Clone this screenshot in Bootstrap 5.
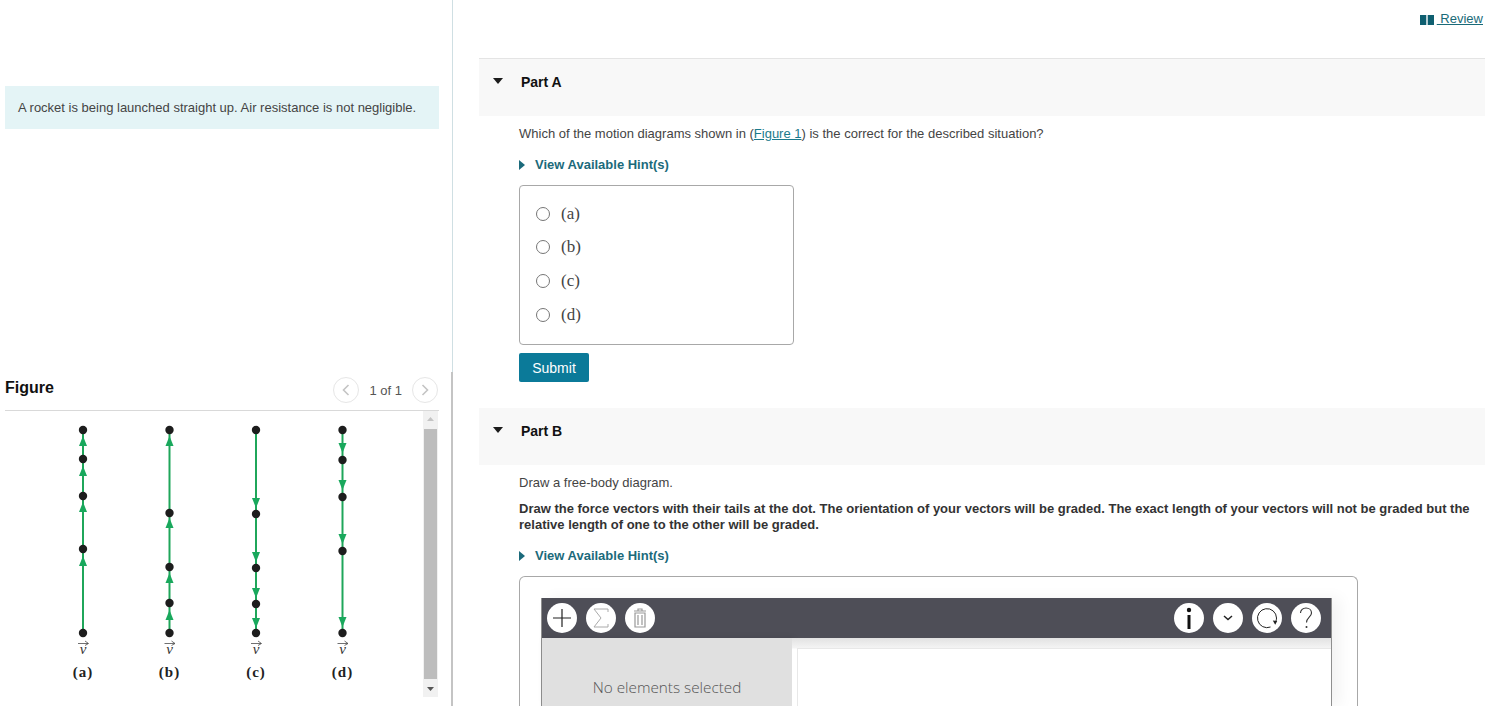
<!DOCTYPE html>
<html>

<head>
	<meta charset="utf-8">
	<meta name="viewport" content="width=device-width, initial-scale=1">
	<title>Part A</title>
	<link href="https://cdn.jsdelivr.net/npm/bootstrap@5.3.3/dist/css/bootstrap.min.css" rel="stylesheet">
	<script src="https://cdn.jsdelivr.net/npm/bootstrap@5.3.3/dist/js/bootstrap.bundle.min.js"></script>
	<style>
		html, body {
			height: 706px;
			overflow: hidden;
		}

		body {
			font-family: "Liberation Sans", Arial, sans-serif;
			font-size: 13px;
			line-height: 18px;
			color: #444;
			background: #fff;
		}

		a {
			color: #1b7a8c;
		}

		.left-pane {
			width: 453px;
			height: 706px;
			padding: 86px 14px 0 5px;
			position: relative;
		}

		.pane-rule-top,
		.pane-rule-bottom {
			position: absolute;
			right: 0;
			width: 1px;
		}

		.pane-rule-top {
			top: 0;
			height: 372px;
			background: #cfdfe3;
		}

		.pane-rule-bottom {
			top: 372px;
			bottom: 0;
			width: 2px;
			background: #c4c4c4;
		}

		.intro-box {
			height: 43px;
			padding: 13px 13px 0;
			background: #e4f4f6;
		}

		.figure-head {
			margin-top: 242px;
			height: 40px;
			border-bottom: 1px solid #d9d9d9;
		}

		.figure-title {
			font-size: 16px;
			font-weight: 700;
			color: #111;
			margin: 0;
			padding-top: 7px;
		}

		.pager {
			height: 26px;
			margin-top: 6px;
			padding-right: 1px;
			gap: 10px;
			color: #555;
		}

		.pager-count {
			padding-top: 2px;
		}

		.pager-btn {
			width: 26px;
			height: 26px;
			border: 1px solid #e6e6e6;
			border-radius: 50%;
		}

		.figure-view {
			height: 295px;
		}

		.figure-svg {
			width: 418px;
			height: 295px;
			display: block;
		}

		.fake-scroll {
			width: 15px;
			height: 286px;
			background: #f1f1f1;
		}

		.fake-thumb {
			width: 13px;
			height: 250px;
			background: #bdbdbd;
		}

		.right-pane {
			height: 706px;
			overflow: hidden;
			padding: 0 7px 0 26px;
			min-width: 0;
		}

		.review-line {
			height: 58px;
			padding: 10px 2px 0 0;
		}

		.review-line a {
			color: #1a6a78;
		}

		.review-line svg {
			margin-right: 3px;
		}

		.part-band {
			height: 58px;
			padding: 14px 0 0 14px;
			font-size: 14px;
			background: #f8f8f8;
			border-top: 1px solid #e4e4e4;
			color: #111;
			font-weight: 700;
		}

		.part-b {
			height: 57px;
			margin-top: 26px;
			border-top: 0;
		}

		.caret-down {
			width: 0;
			height: 0;
			margin-top: 5px;
			margin-right: 18px;
			border-left: 5.5px solid transparent;
			border-right: 5.5px solid transparent;
			border-top: 6px solid #1c1c1c;
		}

		.part-body {
			padding: 9px 0 0 40px;
		}

		.bold-note {
			margin-top: 9px;
			line-height: 16px;
			font-weight: 700;
			color: #333;
		}

		.hint-line {
			margin-top: 13px;
			color: #1b6a7b;
			font-weight: 700;
			gap: 10px;
		}

		.hint-line.after-note {
			margin-top: 14px;
		}

		.caret-right {
			width: 0;
			height: 0;
			border-top: 5.5px solid transparent;
			border-bottom: 5.5px solid transparent;
			border-left: 6px solid #1b6a7b;
		}

		.answer-box {
			width: 275px;
			height: 160px;
			margin-top: 11px;
			padding: 11px 0 0 16px;
			border: 1px solid #a8a8a8;
			border-radius: 4px;
		}

		.answer-row {
			height: 33.6px;
			gap: 11px;
			font-family: "Liberation Serif", "Times New Roman", serif;
			font-size: 17px;
			color: #444;
		}

		.answer-row .form-check-input {
			width: 14px;
			height: 14px;
			margin: 0;
			border: 1px solid #767676;
		}

		.submit-btn {
			margin-top: 8px;
			width: 70px;
			height: 29px;
			padding: 1px 0 0;
			font-size: 14px;
			color: #fff;
			background: #0b7a99;
			border: 0;
			border-radius: 2px;
		}

		.tool-box {
			width: 839px;
			height: 130px;
			margin-top: 11px;
			padding: 21px 25px 0 21px;
			border: 1px solid #a8a8a8;
			border-bottom: 0;
			border-radius: 6px 6px 0 0;
		}

		.tool-inner {
			height: 108px;
			border-left: 1px solid #8f8f8f;
			border-right: 1px solid #8f8f8f;
			box-shadow: 8px 0 14px rgba(0, 0, 0, .05);
		}

		.tool-bar {
			height: 40px;
			padding: 0 10px 0 5px;
			background: #4e4e57;
		}

		.tool-group {
			gap: 9px;
		}

		.tool-btn {
			width: 30px;
			height: 30px;
			border-radius: 50%;
			background: #fff;
			flex: none;
		}

		.tool-side {
			width: 250px;
			background: #e0e0e0;
			padding-top: 39px;
			font-family: "Open Sans", sans-serif;
			font-size: 15.300px;
			line-height: 20px;
			color: #555;
			font-weight: 300;
			box-shadow: 2px 0 6px rgba(0, 0, 0, .1);
		}

		.tool-canvas-wrap {
			padding: 10px 0 0 5px;
			background: linear-gradient(#e2e2e2, #f4f4f4 10px, #fff 11px);
		}

		.tool-canvas {
			height: 100%;
			background: #fff;
			border-top: 1px solid #e8e8e8;
			border-left: 1px solid #e8e8e8;
		}
	</style>
</head>

<body>
<div class="d-flex">
	<div class="left-pane flex-shrink-0">
		<div class="pane-rule-top"></div>
		<div class="pane-rule-bottom"></div>
		<div class="intro-box">A rocket is being launched straight up. Air resistance is not negligible.</div>

		<div class="figure-head d-flex justify-content-between">
			<h2 class="figure-title">Figure</h2>
			<div class="pager d-flex align-items-center">
				<span class="pager-btn d-flex align-items-center justify-content-center">
					<svg width="8" height="12" viewBox="0 0 8 12"><path d="M6.500 1 1.500 6l5 5" fill="none" stroke="#c4c4c4" stroke-width="1.600"/></svg>
				</span>
				<span class="pager-count">1 of 1</span>
				<span class="pager-btn d-flex align-items-center justify-content-center">
					<svg width="8" height="12" viewBox="0 0 8 12"><path d="M1.500 1l5 5-5 5" fill="none" stroke="#c4c4c4" stroke-width="1.600"/></svg>
				</span>
			</div>
		</div>

		<div class="figure-view d-flex">
			<svg class="figure-svg" id="motionSvg" viewBox="5 411 418 295"></svg>
			<div class="fake-scroll d-flex flex-column align-items-center justify-content-between">
				<svg width="9" height="16" viewBox="0 0 9 16"><path d="M1 10h7L4.500 6z" fill="#c4c4c4"/></svg>
				<div class="fake-thumb"></div>
				<svg width="9" height="16" viewBox="0 0 9 16"><path d="M1 6h7l-3.500 4z" fill="#555"/></svg>
			</div>
		</div>
	</div>

	<div class="right-pane flex-grow-1">
		<div class="review-line text-end">
			<a href="#">
				<svg width="14" height="10" viewBox="0 0 14 10"><path d="M0 0h6.300v10H0zM7.700 0H14v10H7.700z" fill="#0f5f70"/></svg>
				Review</a>
		</div>

		<div class="part-band d-flex align-items-start">
			<span class="caret-down"></span>
			<span>Part A</span>
		</div>
		<div class="part-body">
			<div>Which of the motion diagrams shown in (<a href="#">Figure 1</a>) is the correct for the described situation?</div>
			<div class="hint-line d-flex align-items-center">
				<span class="caret-right"></span>
				<span>View Available Hint(s)</span>
			</div>
			<div class="answer-box">
				<div class="answer-row d-flex align-items-center"><input class="form-check-input" type="radio" name="motion"><span>(a)</span></div>
				<div class="answer-row d-flex align-items-center"><input class="form-check-input" type="radio" name="motion"><span>(b)</span></div>
				<div class="answer-row d-flex align-items-center"><input class="form-check-input" type="radio" name="motion"><span>(c)</span></div>
				<div class="answer-row d-flex align-items-center"><input class="form-check-input" type="radio" name="motion"><span>(d)</span></div>
			</div>
			<button type="button" class="btn submit-btn">Submit</button>
		</div>

		<div class="part-band part-b d-flex align-items-start">
			<span class="caret-down"></span>
			<span>Part B</span>
		</div>
		<div class="part-body">
			<div>Draw a free-body diagram.</div>
			<div class="bold-note">Draw the force vectors with their tails at the dot. The orientation of your vectors will be graded. The exact length of your vectors will not be graded but the relative length of one to the other will be graded.</div>
			<div class="hint-line after-note d-flex align-items-center">
				<span class="caret-right"></span>
				<span>View Available Hint(s)</span>
			</div>
			<div class="tool-box">
				<div class="tool-inner d-flex flex-column">
					<div class="tool-bar d-flex align-items-center justify-content-between flex-shrink-0">
						<div class="tool-group d-flex">
							<span class="tool-btn d-flex align-items-center justify-content-center">
								<svg width="18" height="18" viewBox="0 0 18 18"><path d="M9 0v18M0 9h18" stroke="#222" stroke-width="1.200"/></svg>
							</span>
							<span class="tool-btn d-flex align-items-center justify-content-center">
								<svg width="16" height="20" viewBox="0 0 16 20"><path d="M15 4V1H1l7 9-7 9h14v-3" fill="none" stroke="#aaa" stroke-width="1"/></svg>
							</span>
							<span class="tool-btn d-flex align-items-center justify-content-center">
								<svg width="14" height="20" viewBox="0 0 14 20"><path d="M5 3V1h4v2M1 3h12M2 5h10v14H2zM5 7v10M9 7v10" fill="none" stroke="#999" stroke-width="1.200"/></svg>
							</span>
						</div>
						<div class="tool-group d-flex">
							<span class="tool-btn d-flex align-items-center justify-content-center">
								<svg width="8" height="22" viewBox="0 0 8 22"><circle cx="4" cy="3" r="2.200" fill="#111"/><path d="M4 8v14" stroke="#111" stroke-width="3"/></svg>
							</span>
							<span class="tool-btn d-flex align-items-center justify-content-center">
								<svg width="10" height="6" viewBox="0 0 10 6"><path d="M1 1l4 3.500L9 1" fill="none" stroke="#222" stroke-width="1.500"/></svg>
							</span>
							<span class="tool-btn d-flex align-items-center justify-content-center">
								<svg width="22" height="22" viewBox="0 0 22 22"><path d="M14.500 20A9.500 9.500 0 1 1 20.500 11c0 1.300-.2 2.400-.7 3.500" fill="none" stroke="#222" stroke-width="1"/><path d="M16.800 13.500l2.400 4.200 2-3.800z" fill="#222"/></svg>
							</span>
							<span class="tool-btn d-flex align-items-center justify-content-center">
								<svg width="14" height="22" viewBox="0 0 14 22"><path d="M1.500 6C1.500 3 4 1 7 1s5.500 2 5.500 5c0 4-5 4.500-5 9.500" fill="none" stroke="#333" stroke-width="1.100"/><circle cx="7.500" cy="20" r="1" fill="#333"/></svg>
							</span>
						</div>
					</div>
					<div class="d-flex flex-grow-1">
						<div class="tool-side text-center flex-shrink-0">No elements selected</div>
						<div class="tool-canvas-wrap flex-grow-1"><div class="tool-canvas"></div></div>
					</div>
				</div>
			</div>
		</div>
	</div>
</div>

<script>
	// Motion diagrams: dot heights and arrow tips, in page coordinates
	const diagrams = [
		{ x: 83, label: '(a)', dots: [430, 459, 496, 549, 633], tips: [436, 466, 502, 556], up: true },
		{ x: 169.500, label: '(b)', dots: [430, 513, 567, 603, 633], tips: [436, 518, 573, 610], up: true },
		{ x: 256, label: '(c)', dots: [430, 514, 568, 604, 633], tips: [508, 562, 598, 628], up: false },
		{ x: 342.500, label: '(d)', dots: [430, 460, 497, 551, 633], tips: [453, 490, 544, 627], up: false }
	];

	let svgText = '';
	diagrams.forEach(d => {
		svgText += `<line x1="${d.x}" x2="${d.x}" y1="430" y2="633" stroke="#1fa65a" stroke-width="2"/>`;
		d.tips.forEach(t => {
			const base = d.up ? t + 10 : t - 10;
			svgText += `<path d="M${d.x} ${t}L${d.x - 4} ${base}h8z" fill="#19a85c"/>`;
		});
		d.dots.forEach(y => {
			svgText += `<circle cx="${d.x}" cy="${y}" r="4.200" fill="#1d1d1d"/>`;
		});
		// vector v under each diagram
		svgText += `<path d="M${d.x - 5} 643.500h10m-3-2.500l3.500 2.500-3.500 2" fill="none" stroke="#333" stroke-width=".7"/>`;
		svgText += `<text x="${d.x}" y="654" text-anchor="middle" font-family="Liberation Serif" font-style="italic" font-size="15" fill="#333">v</text>`;
		svgText += `<text x="${d.x}" y="677" text-anchor="middle" font-family="Liberation Serif" font-weight="700" font-size="15" letter-spacing="1" fill="#222">${d.label}</text>`;
	});
	document.getElementById('motionSvg').innerHTML = svgText;
</script>
</body>
</html>
